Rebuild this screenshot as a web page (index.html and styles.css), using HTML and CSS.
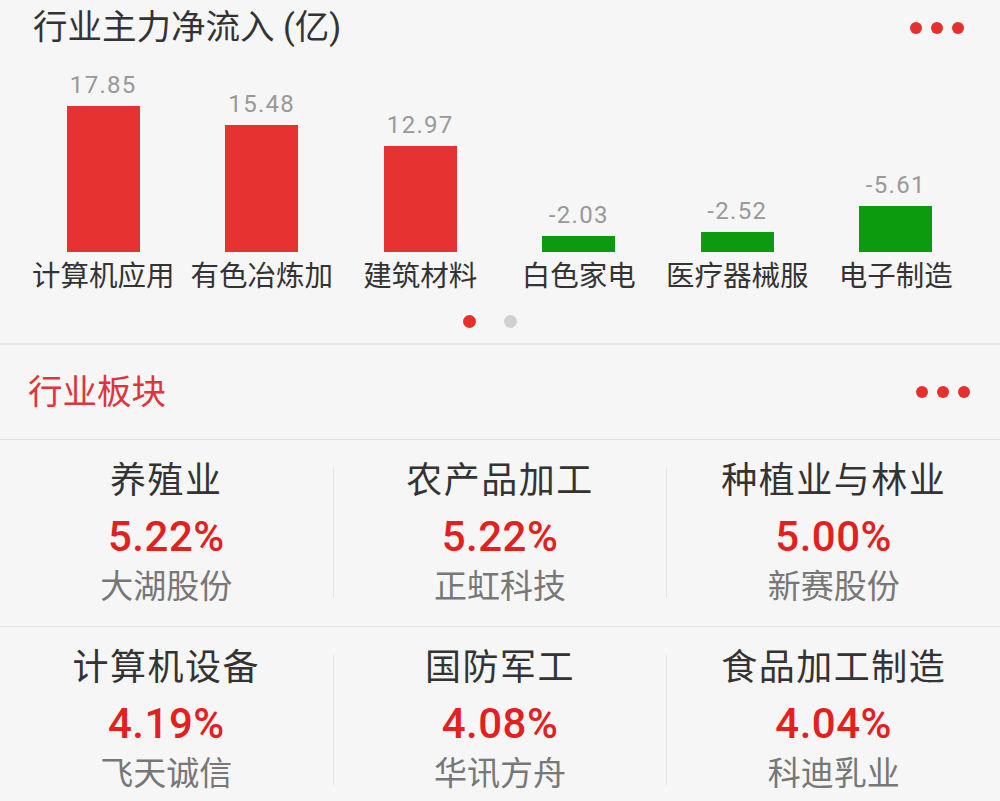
FILE: index.html
```html
<!DOCTYPE html>
<html>
<head>
    <meta charset="UTF-8">
    <meta name="viewport" content="width=device-width, initial-scale=1.0">
    <title>行业资金</title>
    <link rel="stylesheet" href="styles.css">
</head>
<body>
    <!-- 行业主力净流入 柱状图 -->
    <div class="flow_box">
        <div class="head_row">
            <span class="head_title">行业主力净流入 (亿)</span>
            <span class="more"><i></i><i></i><i></i></span>
        </div>

        <div class="chart_row">
            <div class="bar_col">
                <span class="bar_val">17.85</span>
                <span class="bar up" style="height:146px"></span>
                <span class="bar_name">计算机应用</span>
            </div>
            <div class="bar_col">
                <span class="bar_val">15.48</span>
                <span class="bar up" style="height:127px"></span>
                <span class="bar_name">有色冶炼加</span>
            </div>
            <div class="bar_col">
                <span class="bar_val">12.97</span>
                <span class="bar up" style="height:106px"></span>
                <span class="bar_name">建筑材料</span>
            </div>
            <div class="bar_col">
                <span class="bar_val">-2.03</span>
                <span class="bar down" style="height:16px"></span>
                <span class="bar_name">白色家电</span>
            </div>
            <div class="bar_col">
                <span class="bar_val">-2.52</span>
                <span class="bar down" style="height:20px"></span>
                <span class="bar_name">医疗器械服</span>
            </div>
            <div class="bar_col">
                <span class="bar_val">-5.61</span>
                <span class="bar down" style="height:46px"></span>
                <span class="bar_name">电子制造</span>
            </div>
        </div>

        <!--翻页小圆点-->
        <div class="page_dots">
            <i class="on"></i><i></i>
        </div>
    </div>

    <!-- 行业板块 -->
    <div class="plate_box">
        <div class="plate_head">
            <span class="plate_title">行业板块</span>
            <span class="more"><i></i><i></i><i></i></span>
        </div>

        <div class="plate_grid">
            <div class="plate_row">
                <div class="plate_cell">
                    <span class="p_name">养殖业</span>
                    <span class="p_rate">5.22%</span>
                    <span class="p_stock">大湖股份</span>
                </div>
                <div class="plate_cell">
                    <span class="p_name">农产品加工</span>
                    <span class="p_rate">5.22%</span>
                    <span class="p_stock">正虹科技</span>
                </div>
                <div class="plate_cell">
                    <span class="p_name">种植业与林业</span>
                    <span class="p_rate">5.00%</span>
                    <span class="p_stock">新赛股份</span>
                </div>
            </div>
            <div class="plate_row">
                <div class="plate_cell">
                    <span class="p_name">计算机设备</span>
                    <span class="p_rate">4.19%</span>
                    <span class="p_stock">飞天诚信</span>
                </div>
                <div class="plate_cell">
                    <span class="p_name">国防军工</span>
                    <span class="p_rate">4.08%</span>
                    <span class="p_stock">华讯方舟</span>
                </div>
                <div class="plate_cell">
                    <span class="p_name">食品加工制造</span>
                    <span class="p_rate">4.04%</span>
                    <span class="p_stock">科迪乳业</span>
                </div>
            </div>
        </div>
    </div>
</body>
</html>
```

FILE: styles.css
```css
/*公共样式*/
*{margin:0px;padding:0px;box-sizing:border-box;}
html,body{width:100%;height:100%;overflow:hidden;}
body{
    background:#f6f6f6;
    font-family:Roboto,"Noto Sans CJK SC",sans-serif;
    color:#333;
}

/*右上角三个红点*/
.more{display:flex;gap:9px;}
.more i{display:block;width:12px;height:12px;border-radius:50%;background:#e5302e;}

/*资金流入头部*/
.head_row{height:55px;display:flex;justify-content:space-between;align-items:center;padding:0 36px 0 33px;}
.head_title{font-size:34.5px;color:#333;line-height:1;}

/*柱状图*/
.chart_row{height:239px;display:flex;align-items:flex-end;padding:0 25px 0 24px;}
.bar_col{flex:1;display:flex;flex-direction:column;align-items:center;}
.bar_val{font-size:24px;line-height:30px;color:#999;letter-spacing:1.3px;margin-bottom:6px;}
.bar{display:block;width:73px;}
.bar.up{background:#e63331;}
.bar.down{background:#0c9a0e;}
.bar_name{font-size:28.5px;line-height:34px;margin-top:8px;white-space:nowrap;color:#333;}

/*翻页圆点*/
.page_dots{height:49px;display:flex;justify-content:center;gap:28px;padding-top:21px;padding-right:21px;}
.page_dots i{display:block;width:13px;height:13px;border-radius:50%;background:#d0d0d0;}
.page_dots i.on{background:#e5302e;}

/*行业板块*/
.plate_box{border-top:2px solid #e3e3e3;}
.plate_head{height:95px;display:flex;justify-content:space-between;align-items:center;padding:0 30px 0 28px;border-bottom:1px solid #dedede;}
.plate_title{font-size:34.5px;color:#e0343a;line-height:1;}

.plate_row{display:flex;height:187px;border-bottom:1px solid #e2e2e2;padding:28px 0;}
.plate_cell{flex:1;display:flex;flex-direction:column;align-items:center;justify-content:center;border-left:1px solid #e4e4e4;}
.plate_cell:first-child{border-left:none;}
.p_name{font-size:36px;line-height:44px;color:#333;white-space:nowrap;letter-spacing:1.5px;}
.p_rate{font-size:42px;line-height:60px;margin-top:4px;color:#e3201e;font-weight:500;letter-spacing:0.5px;}
.p_stock{font-size:33px;line-height:40px;color:#777;}
```
